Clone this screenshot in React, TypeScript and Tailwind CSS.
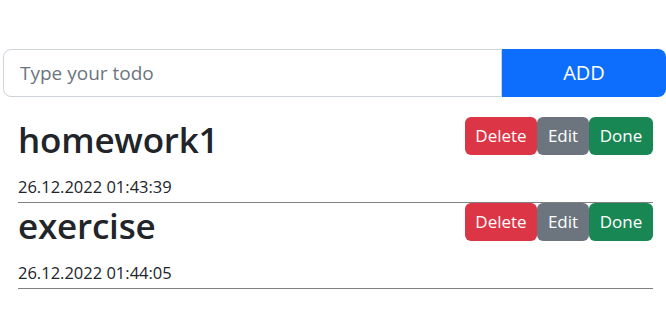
import React from "react";

const items = [
  { title: "homework1", date: "26.12.2022 01:43:39" },
  { title: "exercise", date: "26.12.2022 01:44:05" },
];

export default function App() {
  return (
    <div
      className="w-[666px] h-[334px] bg-white text-[#212529] overflow-hidden"
      style={{ fontFamily: '"Open Sans", "Noto Sans", sans-serif' }}
    >
      <div className="pt-[49px] pl-[3px] flex">
        <input
          className="flex-1 min-w-0 h-[48px] border border-[#ced4da] rounded-l-[8px] px-4 text-[19px] text-[#212529] placeholder:text-[#6c757d] outline-none"
          placeholder="Type your todo"
        />
        <button className="w-[164px] h-[48px] bg-[#0d6efd] text-white text-[20px] rounded-r-[8px]">
          ADD
        </button>
      </div>
      <div className="mt-[20px] ml-[18px] w-[635px]">
        {items.map((it) => (
          <div
            key={it.title}
            className="flex justify-between h-[86px] border-b border-[#808080]"
          >
            <div className="flex flex-col">
              <h1 className="text-[35px] leading-[48px] mt-[-1px] font-semibold tracking-[-0.2px]">
                {it.title}
              </h1>
              <p className="text-[16.5px] leading-[24px] mt-[11px]">{it.date}</p>
            </div>
            <div className="flex h-[38px] text-white text-[17px]">
              <button className="w-[72px] bg-[#dc3545] rounded-[6px]">Delete</button>
              <button className="w-[52px] bg-[#6c757d] rounded-[6px]">Edit</button>
              <button className="w-[64px] bg-[#198754] rounded-[6px]">Done</button>
            </div>
          </div>
        ))}
      </div>
    </div>
  );
}
